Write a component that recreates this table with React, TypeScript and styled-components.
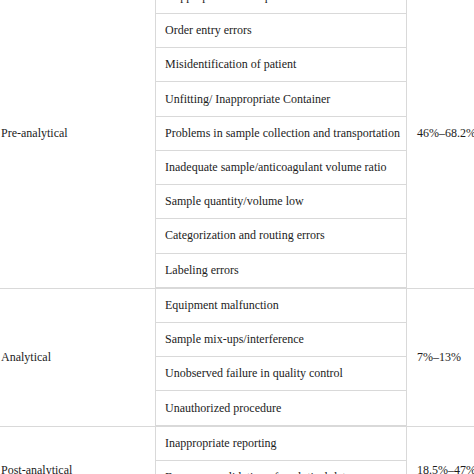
import React from "react";
import styled, { createGlobalStyle } from "styled-components";

const Global = createGlobalStyle`
  html, body { margin: 0; padding: 0; background: #ffffff; }
  body { width: 474px; height: 474px; overflow: hidden; }
`;

const LINE = "#d9d9d9";

const Table = styled.div`
  margin-top: -20.23px;
  font-family: "Liberation Serif", "Times New Roman", serif;
  font-size: 12px;
  color: #1c1c1c;
  width: 520px;
`;

const Group = styled.div`
  display: grid;
  grid-template-columns: 155px 251px 1fr;
  border-bottom: 1px solid ${LINE};
`;

const Label = styled.div<{ $rows: number }>`
  grid-column: 1;
  grid-row: 1 / span ${(p) => p.$rows};
  display: flex;
  align-items: center;
  padding-left: 1px;
`;

const Value = styled.div<{ $rows: number }>`
  grid-column: 3;
  grid-row: 1 / span ${(p) => p.$rows};
  display: flex;
  align-items: center;
  padding-left: 10px;
  border-left: 1px solid ${LINE};
`;

const Item = styled.div<{ $h?: number }>`
  grid-column: 2;
  height: ${(p) => p.$h ?? 33.23}px;
  display: flex;
  align-items: center;
  padding-left: 9px;
  border-left: 1px solid ${LINE};
  border-bottom: 1px solid ${LINE};
  white-space: nowrap;
  &:last-of-type { border-bottom: none; }
`;

type GroupData = { label: string; value: string; items: string[]; last?: number };

const groups: GroupData[] = [
  {
    label: "Pre-analytical",
    value: "46%–68.2%",
    items: [
      "Inappropriate test request",
      "Order entry errors",
      "Misidentification of patient",
      "Unfitting/ Inappropriate Container",
      "Problems in sample collection and transportation",
      "Inadequate sample/anticoagulant volume ratio",
      "Sample quantity/volume low",
      "Categorization and routing errors",
      "Labeling errors",
    ],
  },
  {
    label: "Analytical",
    value: "7%–13%",
    items: [
      "Equipment malfunction",
      "Sample mix-ups/interference",
      "Unobserved failure in quality control",
      "Unauthorized procedure",
    ],
  },
  {
    label: "Post-analytical",
    value: "18.5%–47%",
    items: [
      "Inappropriate reporting",
      "Erroneous validation of analytical data",
      "Delay in reporting",
    ],
    last: 19,
  },
];

export default function App() {
  return (
    <>
      <Global />
      <Table>
        {groups.map((g) => (
          <Group key={g.label}>
            <Label $rows={g.items.length}>{g.label}</Label>
            {g.items.map((it, i) => (
              <Item
                key={it}
                $h={i === g.items.length - 1 && g.last ? g.last : undefined}
              >
                {it}
              </Item>
            ))}
            <Value $rows={g.items.length}>{g.value}</Value>
          </Group>
        ))}
      </Table>
    </>
  );
}
